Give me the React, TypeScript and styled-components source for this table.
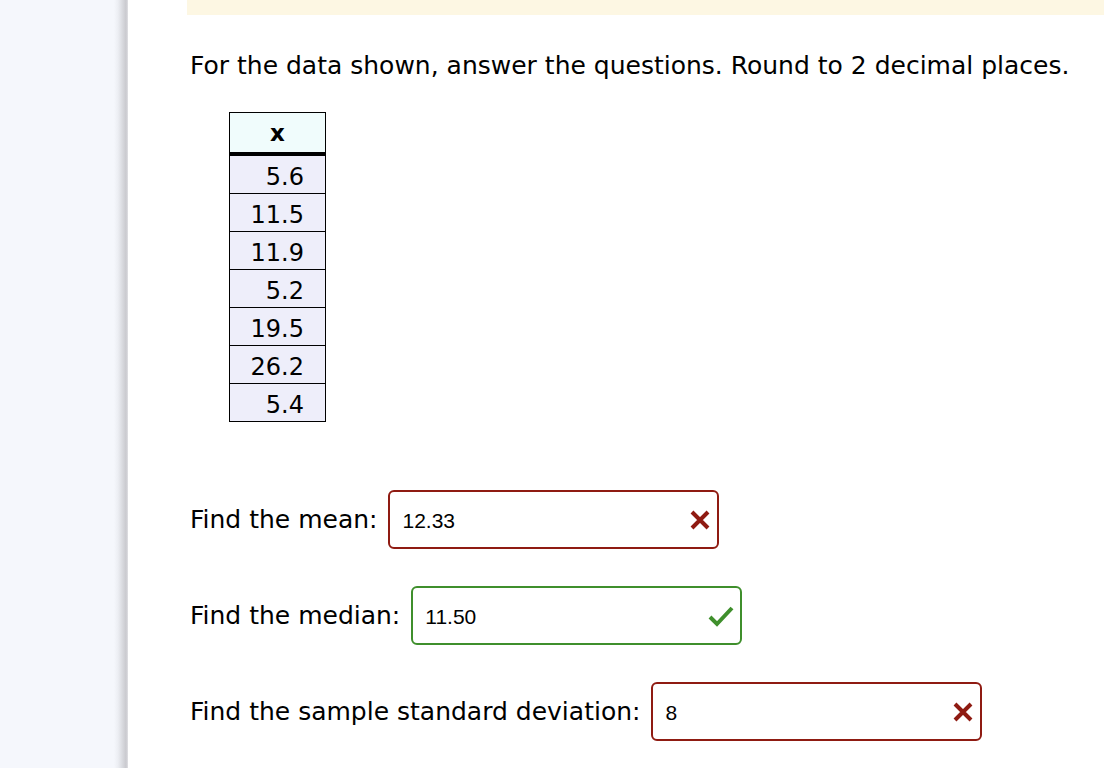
import React from "react";
import styled, { createGlobalStyle } from "styled-components";

const Global = createGlobalStyle`
  html, body { margin: 0; padding: 0; background: #ffffff; }
  body { font-family: "DejaVu Sans", Verdana, sans-serif; color: #000; }
`;

const Page = styled.div`
  display: flex;
  width: 1104px;
  height: 768px;
  overflow: hidden;
`;

const Sidebar = styled.div`
  width: 128px;
  flex: none;
  background: linear-gradient(to right, #f5f7fc 0px, #f5f7fc 114px, #eceef3 118px, #d6d7dc 123px, #c9c9ce 126px, #e0e0e4 128px);
`;

const Main = styled.div`
  flex: 1;
  display: flex;
  flex-direction: column;
  align-items: flex-start;
  padding-left: 59px;
`;

const Banner = styled.div`
  align-self: stretch;
  height: 15px;
  background: #fdf7e3;
`;

const Prompt = styled.p`
  margin: 36px 0 0 3px;
  font-size: 25px;
  line-height: 30px;
`;

const DataTable = styled.table`
  margin: 31px 0 0 42px;
  width: 97px;
  border-collapse: collapse;
  font-size: 24px;
`;

const HeadCell = styled.th`
  height: 39px;
  padding: 0;
  background: #f0fcfc;
  border: 1px solid #000;
  border-bottom: 4px solid #000;
  font-weight: bold;
  font-size: 23px;
  text-align: center;
`;

const Cell = styled.td`
  height: 33px;
  padding: 4px 21px 0 0;
  background: #eeeefa;
  border: 1px solid #000;
  text-align: right;
  line-height: 1;
`;

const Questions = styled.div`
  display: flex;
  flex-direction: column;
  gap: 37px;
  margin: 68px 0 0 3px;
`;

const Row = styled.div`
  display: flex;
  align-items: center;
  gap: 11px;
  font-size: 25px;
`;

const Field = styled.div<{ $ok: boolean }>`
  box-sizing: border-box;
  width: 331px;
  height: 59px;
  border: 2px solid ${(p) => (p.$ok ? "#3f8f2c" : "#8f1b12")};
  border-radius: 6px;
  display: flex;
  align-items: center;
  justify-content: space-between;
  padding: 0 6px 0 12px;
`;

const Value = styled.span`
  font-family: "Liberation Sans", Arial, sans-serif;
  font-size: 21px;
  padding-top: 2px;
`;

const Cross = () => (
  <svg width="22" height="22" viewBox="0 0 22 22">
    <path d="M3 3 L19 19 M19 3 L3 19" stroke="#8f1b12" strokeWidth="4" strokeLinecap="butt" />
  </svg>
);

const Check = () => (
  <svg width="26" height="22" viewBox="0 0 26 22">
    <path d="M2 12 L9 19 L24 3" stroke="#3f8f2c" strokeWidth="4" fill="none" strokeLinejoin="miter" />
  </svg>
);

const data = ["5.6", "11.5", "11.9", "5.2", "19.5", "26.2", "5.4"];

const questions = [
  { label: "Find the mean:", value: "12.33", ok: false },
  { label: "Find the median:", value: "11.50", ok: true },
  { label: "Find the sample standard deviation:", value: "8", ok: false },
];

export default function App() {
  return (
    <>
      <Global />
      <Page>
        <Sidebar />
        <Main>
          <Banner />
          <Prompt>For the data shown, answer the questions. Round to 2 decimal places.</Prompt>
          <DataTable>
            <thead>
              <tr>
                <HeadCell>x</HeadCell>
              </tr>
            </thead>
            <tbody>
              {data.map((d, i) => (
                <tr key={i}>
                  <Cell>{d}</Cell>
                </tr>
              ))}
            </tbody>
          </DataTable>
          <Questions>
            {questions.map((q) => (
              <Row key={q.label}>
                <span>{q.label}</span>
                <Field $ok={q.ok}>
                  <Value>{q.value}</Value>
                  {q.ok ? <Check /> : <Cross />}
                </Field>
              </Row>
            ))}
          </Questions>
        </Main>
      </Page>
    </>
  );
}
